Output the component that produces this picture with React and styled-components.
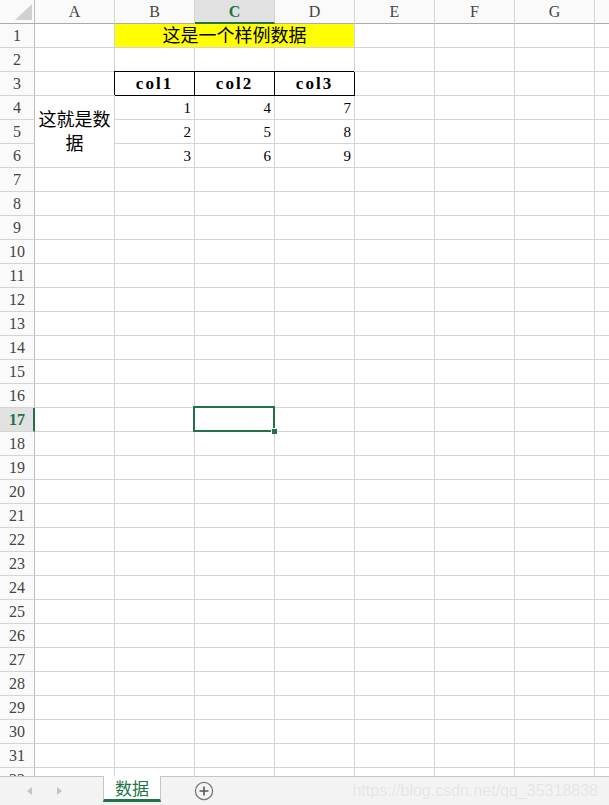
import React from "react";
import styled, { createGlobalStyle, css } from "styled-components";

const GlobalStyle = createGlobalStyle`
  html, body {
    margin: 0;
    padding: 0;
    overflow: hidden;
    background: #ffffff;
  }
`;

const SERIF = `"Liberation Serif", "Noto Sans CJK SC", serif`;
const GREEN = "#217346";
const GRID = "#d4d4d4";

const Window = styled.div`
  width: 609px;
  height: 805px;
  display: flex;
  flex-direction: column;
  overflow: hidden;
  font-family: ${SERIF};
  color: #000;
`;

const Sheet = styled.div`
  flex: 1;
  overflow: hidden;
  display: grid;
  grid-template-columns: 35px repeat(8, 80px);
  grid-auto-rows: 24px;
  align-content: start;
`;

const Corner = styled.div`
  position: relative;
  box-sizing: border-box;
  background: #fafafa;
  border-right: 1px solid #bdbdbd;
  border-bottom: 1px solid #ababab;
  &::after {
    content: "";
    position: absolute;
    right: 2px;
    bottom: 3px;
    width: 17px;
    height: 16px;
    background: #d0d0d0;
    clip-path: polygon(100% 0, 100% 100%, 0 100%);
  }
`;

const ColHead = styled.div`
  box-sizing: border-box;
  background: #fafafa;
  border-right: 1px solid ${GRID};
  border-bottom: 1px solid #ababab;
  display: flex;
  align-items: center;
  justify-content: center;
  font-size: 16px;
  color: #444;
  ${(p) =>
    p.$active &&
    css`
      background: #e1e1e1;
      border-bottom: 2px solid ${GREEN};
      color: ${GREEN};
      font-weight: bold;
      padding-top: 1px;
    `}
`;

const RowHead = styled.div`
  box-sizing: border-box;
  background: #fafafa;
  border-right: 1px solid #bdbdbd;
  border-bottom: 1px solid ${GRID};
  display: flex;
  align-items: center;
  justify-content: center;
  font-size: 16px;
  color: #444;
  ${(p) =>
    p.$active &&
    css`
      background: #e1e1e1;
      border-right: 2px solid ${GREEN};
      color: ${GREEN};
      font-weight: bold;
      padding-left: 1px;
    `}
`;

const Cell = styled.div`
  position: relative;
  box-sizing: border-box;
  border-right: 1px solid ${GRID};
  border-bottom: 1px solid ${GRID};
  background: ${(p) => p.$fill || "#ffffff"};
  display: flex;
  align-items: center;
  justify-content: ${(p) =>
    p.$align === "right" ? "flex-end" : p.$align === "center" ? "center" : "flex-start"};
  padding: 0 3px;
  font-size: ${(p) => (p.$cjk ? "18px" : "15px")};
  line-height: 24px;
  white-space: ${(p) => (p.$wrap ? "normal" : "nowrap")};
  text-align: ${(p) => p.$align || "left"};
  ${(p) =>
    p.$bold &&
    css`
      font-weight: bold;
      font-size: 17px;
      letter-spacing: 2px;
    `}
  ${(p) =>
    p.$boxed &&
    css`
      border-right: 1px solid #000;
      border-bottom: 1px solid #000;
      box-shadow: -1px -1px 0 0 #000;
    `}
  ${(p) =>
    p.$selected &&
    css`
      z-index: 2;
      &::after {
        content: "";
        position: absolute;
        top: -2px;
        left: -2px;
        right: -1px;
        bottom: -1px;
        border: 2px solid ${GREEN};
      }
      &::before {
        content: "";
        position: absolute;
        right: -3px;
        bottom: -3px;
        width: 5px;
        height: 5px;
        background: ${GREEN};
        border-left: 1px solid #fff;
        border-top: 1px solid #fff;
        z-index: 3;
      }
    `}
`;

const WrapText = styled.span`
  display: block;
  width: 100%;
  text-align: center;
  line-height: 24px;
`;

const TabBar = styled.div`
  height: 29px;
  flex: none;
  box-sizing: border-box;
  background: #f3f3f3;
  border-top: 1px solid #c6c6c6;
  display: flex;
  align-items: flex-start;
`;

const Nav = styled.div`
  width: 103px;
  height: 28px;
  display: flex;
  align-items: center;
  padding-left: 27px;
  box-sizing: border-box;
  gap: 25px;
`;

const Arrow = styled.span`
  width: 0;
  height: 0;
  border-top: 4px solid transparent;
  border-bottom: 4px solid transparent;
  ${(p) =>
    p.$dir === "left"
      ? css`
          border-right: 5px solid #c4c4c4;
        `
      : css`
          border-left: 5px solid #c4c4c4;
        `}
`;

const Tab = styled.div`
  width: 58px;
  height: 26px;
  margin-top: -1px;
  box-sizing: border-box;
  background: #ffffff;
  border-left: 1px solid #c6c6c6;
  border-right: 1px solid #c6c6c6;
  border-bottom: 3px solid ${GREEN};
  display: flex;
  align-items: center;
  justify-content: center;
  font-family: "Noto Sans CJK SC", sans-serif;
  font-size: 17px;
  color: ${GREEN};
`;

const AddSheet = styled.div`
  margin-left: 33px;
  height: 28px;
  display: flex;
  align-items: center;
`;

const Watermark = styled.div`
  margin-left: auto;
  padding-right: 11px;
  height: 28px;
  display: flex;
  align-items: center;
  font-family: "Liberation Sans", Arial, sans-serif;
  font-size: 16px;
  color: #e4e4e4;
  text-shadow: 0 0 1px #ffffff;
  white-space: nowrap;
`;

const COLS = ["A", "B", "C", "D", "E", "F", "G", "H"];
const ROWS = Array.from({ length: 32 }, (_, i) => i + 1);

const cells = {
  "1-1": { text: "这是一个样例数据", span: 3, fill: "#ffff00", align: "center", cjk: true },
  "3-1": { text: "col1", align: "center", bold: true, boxed: true },
  "3-2": { text: "col2", align: "center", bold: true, boxed: true },
  "3-3": { text: "col3", align: "center", bold: true, boxed: true },
  "4-0": { text: "这就是数据", rowSpan: 3, align: "center", cjk: true, wrap: true },
  "4-1": { text: "1", align: "right" },
  "4-2": { text: "4", align: "right" },
  "4-3": { text: "7", align: "right" },
  "5-1": { text: "2", align: "right" },
  "5-2": { text: "5", align: "right" },
  "5-3": { text: "8", align: "right" },
  "6-1": { text: "3", align: "right" },
  "6-2": { text: "6", align: "right" },
  "6-3": { text: "9", align: "right" },
};

const covered = new Set(["1-2", "1-3", "5-0", "6-0"]);
const selected = { row: 17, col: 2 };

const PlusIcon = () => (
  <svg width="20" height="20" viewBox="0 0 20 20">
    <circle cx="10" cy="10" r="8.6" fill="none" stroke="#7a7a7a" strokeWidth="1.3" />
    <path d="M10 5.5v9M5.5 10h9" stroke="#555" strokeWidth="1.6" />
  </svg>
);

const App = () => {
  return (
    <>
      <GlobalStyle />
      <Window>
        <Sheet>
          <Corner />
          {COLS.map((c, i) => (
            <ColHead key={c} $active={i === selected.col}>
              {c}
            </ColHead>
          ))}
          {ROWS.map((r) => (
            <React.Fragment key={r}>
              <RowHead $active={r === selected.row}>{r}</RowHead>
              {COLS.map((c, ci) => {
                const key = `${r}-${ci}`;
                if (covered.has(key)) return null;
                const d = cells[key] || {};
                return (
                  <Cell
                    key={key}
                    style={{
                      gridColumn: `${ci + 2} / span ${d.span || 1}`,
                      gridRow: `${r + 1} / span ${d.rowSpan || 1}`,
                    }}
                    $fill={d.fill}
                    $align={d.align}
                    $bold={d.bold}
                    $boxed={d.boxed}
                    $cjk={d.cjk}
                    $wrap={d.wrap}
                    $selected={r === selected.row && ci === selected.col}
                  >
                    {d.wrap ? <WrapText>{d.text}</WrapText> : d.text}
                  </Cell>
                );
              })}
            </React.Fragment>
          ))}
        </Sheet>
        <TabBar>
          <Nav>
            <Arrow $dir="left" />
            <Arrow $dir="right" />
          </Nav>
          <Tab>数据</Tab>
          <AddSheet>
            <PlusIcon />
          </AddSheet>
          <Watermark>https://blog.csdn.net/qq_35318838</Watermark>
        </TabBar>
      </Window>
    </>
  );
};

export default App;
